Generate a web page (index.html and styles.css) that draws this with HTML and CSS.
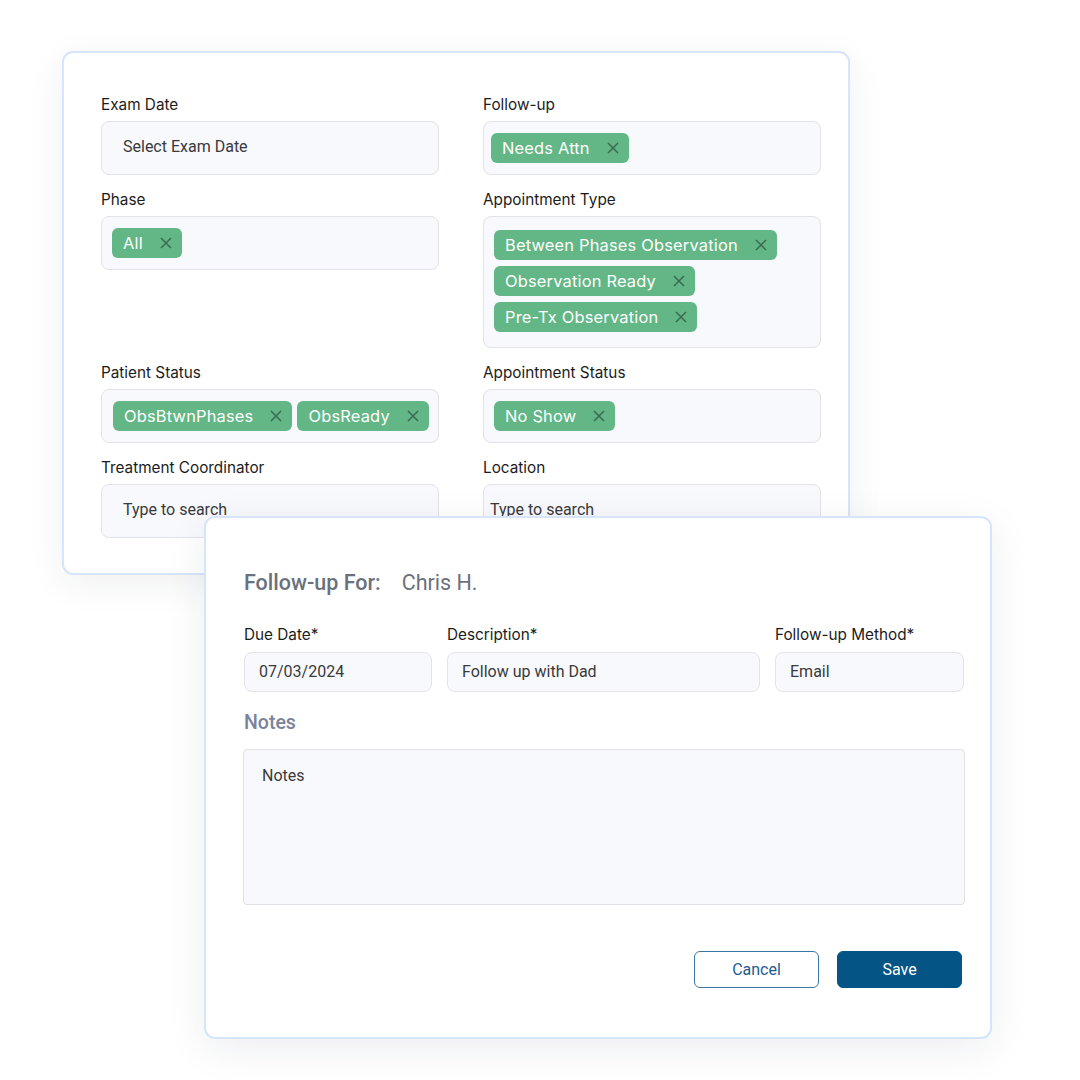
FILE: index.html
```html
<!DOCTYPE html>
<html>
<head>
<meta charset="utf-8">
<link rel="stylesheet" href="styles.css">
</head>
<body>
<div class="canvas">
  <section class="card filters">
    <div class="grid">
      <div class="field">
        <div class="label">Exam Date</div>
        <div class="input">Select Exam Date</div>
      </div>
      <div class="field">
        <div class="label">Follow-up</div>
        <div class="chips chips-tight">
          <span class="chip">Needs Attn<svg class="x" viewBox="0 0 12 12"><path d="M1 1L11 11M11 1L1 11"/></svg></span>
        </div>
      </div>
      <div class="field">
        <div class="label">Phase</div>
        <div class="chips">
          <span class="chip">All<svg class="x" viewBox="0 0 12 12"><path d="M1 1L11 11M11 1L1 11"/></svg></span>
        </div>
      </div>
      <div class="field">
        <div class="label">Appointment Type</div>
        <div class="chips chips-multi">
          <span class="chip">Between Phases Observation<svg class="x" viewBox="0 0 12 12"><path d="M1 1L11 11M11 1L1 11"/></svg></span>
          <span class="chip">Observation Ready<svg class="x" viewBox="0 0 12 12"><path d="M1 1L11 11M11 1L1 11"/></svg></span>
          <span class="chip">Pre-Tx Observation<svg class="x" viewBox="0 0 12 12"><path d="M1 1L11 11M11 1L1 11"/></svg></span>
        </div>
      </div>
      <div class="field">
        <div class="label">Patient Status</div>
        <div class="chips chips-pair">
          <span class="chip">ObsBtwnPhases<svg class="x" viewBox="0 0 12 12"><path d="M1 1L11 11M11 1L1 11"/></svg></span>
          <span class="chip">ObsReady<svg class="x" viewBox="0 0 12 12"><path d="M1 1L11 11M11 1L1 11"/></svg></span>
        </div>
      </div>
      <div class="field">
        <div class="label">Appointment Status</div>
        <div class="chips">
          <span class="chip">No Show<svg class="x" viewBox="0 0 12 12"><path d="M1 1L11 11M11 1L1 11"/></svg></span>
        </div>
      </div>
      <div class="field">
        <div class="label">Treatment Coordinator</div>
        <div class="input">Type to search</div>
      </div>
      <div class="field">
        <div class="label">Location</div>
        <div class="input input-narrow">Type to search</div>
      </div>
    </div>
  </section>

  <section class="card modal">
    <div class="title"><span class="title-key">Follow-up For:</span><span class="title-val">Chris H.</span></div>
    <div class="row3">
      <div class="field">
        <div class="label">Due Date*</div>
        <div class="small-input">07/03/2024</div>
      </div>
      <div class="field">
        <div class="label">Description*</div>
        <div class="small-input">Follow up with Dad</div>
      </div>
      <div class="field">
        <div class="label">Follow-up Method*</div>
        <div class="small-input">Email</div>
      </div>
    </div>
    <div class="notes-head">Notes</div>
    <div class="textarea">Notes</div>
    <div class="actions">
      <button class="btn btn-outline">Cancel</button>
      <button class="btn btn-primary">Save</button>
    </div>
  </section>
</div>
</body>
</html>
```

FILE: styles.css
```css
* { box-sizing: border-box; }
html, body { margin: 0; padding: 0; background: #ffffff; }
.canvas {
  position: relative;
  width: 1080px;
  height: 1080px;
  overflow: hidden;
  background: #ffffff;
}
.card {
  position: absolute;
  background: #ffffff;
  border: 2px solid #d6e5fb;
  border-radius: 11px;
  box-shadow: 0 8px 36px rgba(30, 40, 60, 0.07);
}
.filters {
  left: 62px;
  top: 51px;
  width: 788px;
  height: 524px;
  padding: 42px 0 0 37px;
}
.grid {
  display: grid;
  grid-template-columns: 338px 338px;
  column-gap: 44px;
  row-gap: 15px;
  align-items: start;
}
.label {
  font-family: Inter, "Noto Sans", sans-serif;
  font-size: 15.3px;
  line-height: 20px;
  color: #1c1c1c;
  margin-bottom: 6px;
}
.input {
  height: 54px;
  border: 1px solid #e1e3e8;
  border-radius: 8px;
  background: #f8f9fd;
  padding: 0 0 3px 21px;
  display: flex;
  align-items: center;
  font-family: Roboto, "Liberation Sans", sans-serif;
  font-size: 16px;
  color: #3a3a3a;
}
.input-narrow { padding-left: 6px; }
.chips {
  min-height: 54px;
  border: 1px solid #e1e3e8;
  border-radius: 8px;
  background: #f8f9fd;
  padding: 11px 8px 11px 10px;
  display: flex;
  flex-wrap: wrap;
  gap: 6px;
  align-content: flex-start;
}
.chips-tight { padding-left: 7px; }
.chips-multi { padding: 13px 8px 15px 10px; }
.chips-pair { padding-left: 11px; padding-right: 2px; gap: 5px; }
.chip {
  height: 30px;
  display: inline-flex;
  align-items: center;
  gap: 17px;
  padding: 0 10px 0 11px;
  background: #63b685;
  border-radius: 6px;
  color: #ffffff;
  font-family: Inter, "Noto Sans", sans-serif;
  font-size: 16.4px;
  letter-spacing: 0.2px;
  white-space: nowrap;
}
.x {
  width: 12px;
  height: 12px;
  flex: none;
}
.x path {
  stroke: #3c6a4f;
  stroke-width: 1.5;
  fill: none;
}

.modal {
  left: 204px;
  top: 516px;
  width: 788px;
  height: 523px;
  padding: 52px 26px 0 38px;
  box-shadow: 0 10px 40px rgba(30, 40, 60, 0.08);
}
.title {
  display: flex;
  gap: 21px;
  font-family: Roboto, "Liberation Sans", sans-serif;
  font-size: 21.5px;
  line-height: 26px;
  color: #6b717c;
}
.title-key { font-weight: 500; }
.row3 {
  display: grid;
  grid-template-columns: 188px 313px 189px;
  column-gap: 15px;
  margin-top: 29px;
}
.row3 .label { margin-bottom: 7px; }
.small-input {
  height: 40px;
  border: 1px solid #e1e3e8;
  border-radius: 8px;
  background: #f8f9fd;
  padding: 0 0 2px 14px;
  display: flex;
  align-items: center;
  font-family: Roboto, "Liberation Sans", sans-serif;
  font-size: 16px;
  color: #3a3a3a;
}
.notes-head {
  margin-top: 19px;
  font-family: Roboto, "Liberation Sans", sans-serif;
  font-weight: 500;
  font-size: 19.5px;
  line-height: 24px;
  color: #7a839c;
}
.textarea {
  margin-top: 14px;
  margin-left: -1px;
  width: 722px;
  height: 156px;
  border: 1px solid #dfe1e6;
  border-radius: 4px;
  background: #f8f9fd;
  padding: 16px 18px;
  font-family: Roboto, "Liberation Sans", sans-serif;
  font-size: 16px;
  line-height: 20px;
  color: #3a3a3a;
}
.actions {
  display: flex;
  justify-content: flex-end;
  gap: 18px;
  margin-top: 46px;
  padding-right: 2px;
}
.btn {
  width: 125px;
  height: 37px;
  border-radius: 6px;
  font-family: Roboto, "Liberation Sans", sans-serif;
  font-size: 16px;
  cursor: pointer;
}
.btn-outline {
  background: #ffffff;
  border: 1px solid #3a76a5;
  color: #1f5b8e;
}
.btn-primary {
  background: #045486;
  border: 1px solid #045486;
  color: #ffffff;
}
```
